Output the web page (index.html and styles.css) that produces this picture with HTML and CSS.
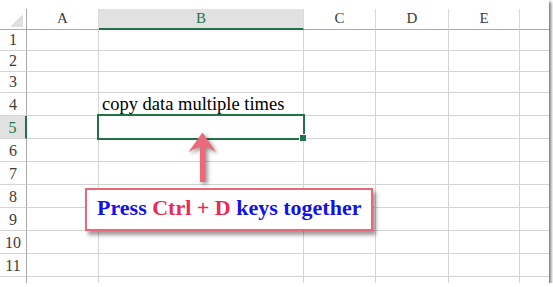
FILE: index.html
```html
<!DOCTYPE html>
<html>
<head>
<meta charset="utf-8">
<link rel="stylesheet" href="styles.css">
</head>
<body>
<div class="sheet">
  <div class="grid">
    <div class="corner"><span class="tri"></span></div>
    <div class="ch">A</div><div class="ch sel">B</div><div class="ch">C</div><div class="ch">D</div><div class="ch">E</div><div class="ch last"></div>

    <div class="rh">1</div><div class="c"></div><div class="c"></div><div class="c"></div><div class="c"></div><div class="c"></div><div class="c last"></div>
    <div class="rh">2</div><div class="c"></div><div class="c"></div><div class="c"></div><div class="c"></div><div class="c"></div><div class="c last"></div>
    <div class="rh">3</div><div class="c"></div><div class="c"></div><div class="c"></div><div class="c"></div><div class="c"></div><div class="c last"></div>
    <div class="rh">4</div><div class="c"></div><div class="c txt">copy data multiple times</div><div class="c"></div><div class="c"></div><div class="c"></div><div class="c last"></div>
    <div class="rh sel">5</div><div class="c"></div><div class="c"></div><div class="c"></div><div class="c"></div><div class="c"></div><div class="c last"></div>
    <div class="rh">6</div><div class="c"></div><div class="c"></div><div class="c"></div><div class="c"></div><div class="c"></div><div class="c last"></div>
    <div class="rh">7</div><div class="c"></div><div class="c"></div><div class="c"></div><div class="c"></div><div class="c"></div><div class="c last"></div>
    <div class="rh">8</div><div class="c"></div><div class="c"></div><div class="c"></div><div class="c"></div><div class="c"></div><div class="c last"></div>
    <div class="rh">9</div><div class="c"></div><div class="c"></div><div class="c"></div><div class="c"></div><div class="c"></div><div class="c last"></div>
    <div class="rh">10</div><div class="c"></div><div class="c"></div><div class="c"></div><div class="c"></div><div class="c"></div><div class="c last"></div>
    <div class="rh">11</div><div class="c"></div><div class="c"></div><div class="c"></div><div class="c"></div><div class="c"></div><div class="c last"></div>
    <div class="rh">12</div><div class="c"></div><div class="c"></div><div class="c"></div><div class="c"></div><div class="c"></div><div class="c last"></div>
  </div>

  <div class="selbox"></div>
  <div class="handle"></div>

  <svg class="arrow" width="40" height="60" viewBox="0 0 40 60">
    <path d="M17.5 2.5 L31 22 Q25 18.5 20.5 16.5 L20.5 52 L15 52 L15 16.5 Q10 18.5 3.5 22 Z" fill="#ea6a7c"/>
  </svg>

  <div class="callout">
    <span class="blue">Press </span><span class="red">Ctrl + D</span><span class="blue"> keys together</span>
  </div>
</div>
</body>
</html>
```
FILE: styles.css
```css
html, body {
  margin: 0;
  padding: 0;
  background: #ffffff;
}

.sheet {
  position: relative;
  width: 549px;
  height: 283px;
  padding-top: 9px;
  box-sizing: border-box;
  background: #ffffff;
  overflow: hidden;
  box-shadow: 2px 2px 3px rgba(0, 0, 0, 0.55);
  font-family: "Liberation Serif", "Times New Roman", serif;
}

.grid {
  display: grid;
  grid-template-columns: 27px 72px 205px 72px 73px 71px 29px;
  grid-template-rows: 21px 21px 21px 21px 23px 23px 23px 23px 23px 23px 23px 23px 23px;
}

.corner {
  display: flex;
  justify-content: flex-end;
  align-items: flex-end;
  padding: 0 3px 2px 0;
  border-right: 1px solid #ababab;
  border-bottom: 1px solid #ababab;
  box-sizing: border-box;
}

.tri {
  width: 13px;
  height: 13px;
  background: #dfdfdf;
  clip-path: polygon(100% 0, 100% 100%, 0 100%);
}

.ch {
  display: flex;
  justify-content: center;
  align-items: flex-end;
  padding-bottom: 3px;
  font-size: 15px;
  line-height: 15px;
  color: #3b3b3b;
  border-right: 1px solid #dadada;
  border-bottom: 1px solid #ababab;
  box-sizing: border-box;
}

.ch.sel {
  background: #e1e1e1;
  color: #217346;
  border-bottom: 2px solid #217346;
  padding-bottom: 2px;
}

.ch.last {
  border-right: none;
}

.rh {
  display: flex;
  justify-content: center;
  align-items: flex-end;
  padding-bottom: 2px;
  font-size: 16px;
  line-height: 16px;
  color: #3b3b3b;
  border-right: 1px solid #ababab;
  border-bottom: 1px solid #d4d4d4;
  box-sizing: border-box;
}

.rh.sel {
  background: #e1e1e1;
  color: #217346;
  border-right: 2px solid #217346;
}

.c {
  border-right: 1px solid #d4d4d4;
  border-bottom: 1px solid #d4d4d4;
  box-sizing: border-box;
}

.c.last {
  border-right: none;
}

.txt {
  font-size: 18.5px;
  line-height: 22px;
  padding-left: 3px;
  color: #000000;
  white-space: nowrap;
}

.selbox {
  position: absolute;
  left: 97px;
  top: 114px;
  width: 208px;
  height: 26px;
  border: 2px solid #217346;
  box-sizing: border-box;
}

.handle {
  position: absolute;
  left: 300px;
  top: 135px;
  width: 6px;
  height: 6px;
  background: #217346;
  box-shadow: 0 0 0 1px #ffffff;
}

.arrow {
  position: absolute;
  left: 185px;
  top: 130px;
  filter: drop-shadow(2px 2px 2px rgba(0, 0, 0, 0.45));
}

.callout {
  position: absolute;
  left: 85px;
  top: 188px;
  width: 288px;
  height: 43px;
  box-sizing: border-box;
  border: 2px solid #e8687a;
  background: #ffffff;
  padding-left: 10px;
  font-weight: bold;
  font-size: 22px;
  line-height: 35px;
  white-space: nowrap;
  box-shadow: 3px 4px 4px rgba(0, 0, 0, 0.4);
}

.blue {
  color: #1212e8;
}

.red {
  color: #ec2a55;
}
```
